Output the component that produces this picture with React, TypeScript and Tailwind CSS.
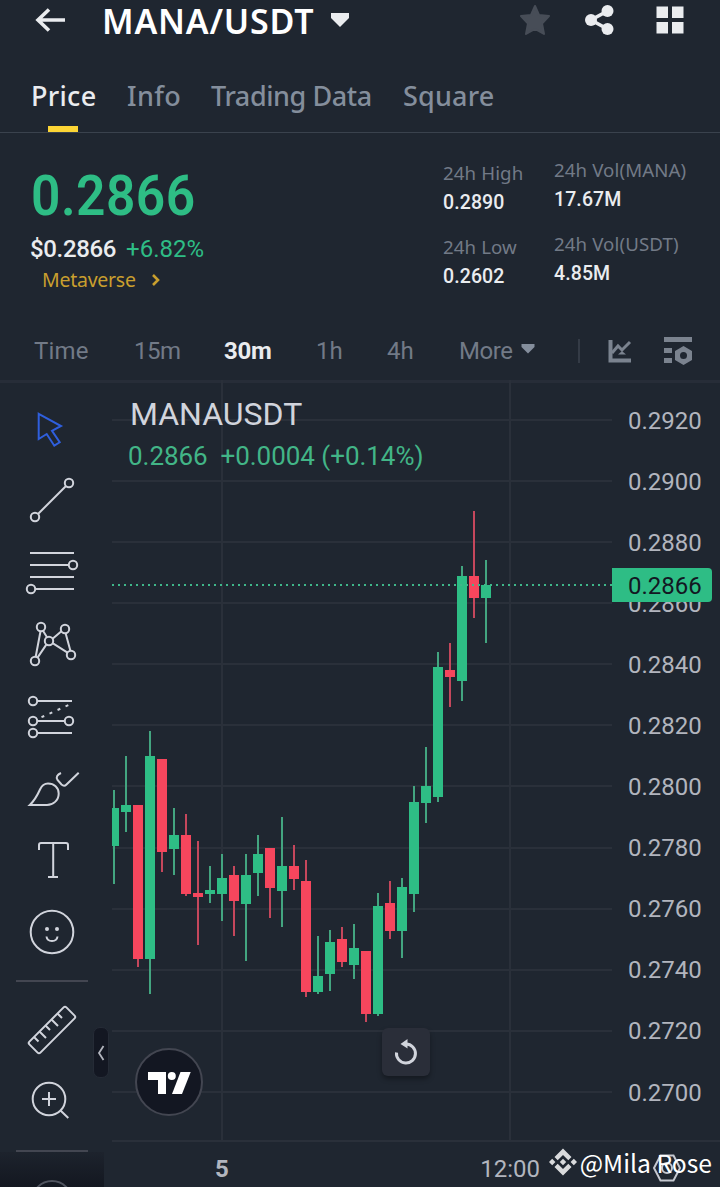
import React from 'react';

type Candle = [high: number, top: number, bottom: number, low: number, up: 0 | 1];

// One candle every 12px, oldest first
const candles: Candle[] = [
  [790, 808, 846, 884, 1],
  [756, 805, 812, 832, 1],
  [805, 805, 959, 967, 0],
  [731, 756, 959, 994, 1],
  [759, 759, 852, 872, 0],
  [808, 835, 849, 875, 1],
  [814, 835, 894, 896, 0],
  [841, 893, 897, 945, 0],
  [866, 890, 894, 903, 1],
  [854, 878, 894, 921, 1],
  [866, 875, 901, 936, 0],
  [854, 875, 904, 961, 1],
  [835, 854, 873, 896, 1],
  [848, 848, 888, 918, 0],
  [817, 866, 891, 927, 1],
  [845, 866, 879, 890, 0],
  [860, 881, 992, 997, 0],
  [936, 976, 992, 994, 1],
  [930, 942, 974, 991, 1],
  [927, 939, 962, 967, 0],
  [924, 948, 965, 979, 1],
  [951, 951, 1014, 1022, 0],
  [893, 906, 1014, 1016, 1],
  [881, 903, 931, 939, 0],
  [878, 887, 931, 958, 1],
  [786, 802, 894, 912, 1],
  [747, 786, 803, 823, 1],
  [652, 667, 797, 802, 1],
  [643, 670, 677, 707, 0],
  [566, 576, 681, 701, 1],
  [511, 576, 598, 618, 0],
  [560, 585, 598, 643, 1],
];

const gridLines = [420, 481, 542, 603, 664, 725, 786, 848, 909, 970, 1031, 1092];

const priceLabels = [
  '0.2920', '0.2900', '0.2880', '0.2860', '0.2840', '0.2820',
  '0.2800', '0.2780', '0.2760', '0.2740', '0.2720', '0.2700',
];

const Tool = ({ children }: { children: React.ReactNode }) => (
  <svg
    viewBox="0 0 72 72"
    className="block h-[72px] w-[72px] shrink-0"
    fill="none"
    stroke="#d1d4dc"
    strokeWidth="2"
  >
    {children}
  </svg>
);

const Header = () => (
  <header className="flex h-[44px] items-start pl-[34px] pr-[36px]">
    <svg className="mt-[7px] h-[26px] w-[32px]" viewBox="0 0 32 26" fill="none" stroke="#eaecef" strokeWidth="3.6">
      <path d="M31 13H4M15 2.5L4 13L15 23.5" />
    </svg>
    <h1 className="ml-[36px] mt-px whitespace-nowrap font-['Noto_Sans'] text-[34px] font-semibold leading-[40px] tracking-[0.8px] text-white">
      MANA/USDT
    </h1>
    <svg className="ml-auto mt-[12px] h-[16px] w-[20px]" viewBox="0 0 20 16" fill="#eaecef">
      <path d="M1 1H19V6L10 15L1 6Z" />
    </svg>
    <div className="ml-[169px] flex items-start">
      <svg className="mt-[4px] h-[32px] w-[32px]" viewBox="0 0 32 32" fill="#474d57" stroke="#474d57" strokeWidth="2" strokeLinejoin="round">
        <path d="M16 2L20 11L30 12L23 19.5L25 30L16 25L7 30L9 19.5L2 12L12 11Z" />
      </svg>
      <svg className="ml-[34px] mt-[4px] h-[32px] w-[32px]" viewBox="0 0 32 32" fill="#eaecef">
        <path d="M22.5 7L6 16L22.5 25" fill="none" stroke="#eaecef" strokeWidth="3.6" />
        <circle cx="22.5" cy="7" r="6" />
        <circle cx="6" cy="16" r="6" />
        <circle cx="22.5" cy="25" r="6" />
      </svg>
      <svg className="ml-[39px] mt-[6px] h-[28px] w-[28px]" viewBox="0 0 28 28" fill="#eaecef">
        <path d="M0.5 0.5H12V12H0.5ZM16 0.5H27.5V12H16ZM0.5 16H12V27.5H0.5ZM16 16H27.5V27.5H16Z" />
      </svg>
    </div>
  </header>
);

const Tabs = () => (
  <nav className="flex h-[89px] items-start border-b border-[#3a424d] pl-[31px] pt-[32px] font-['Noto_Sans'] text-[27px] font-medium leading-[40px] text-[#848e9c]">
    <div className="relative w-[96px] whitespace-nowrap tracking-[0.3px] text-[#eaecef]">
      Price
      <span className="absolute left-[17px] top-[50px] h-[6px] w-[30px] bg-[#fcd535]" />
    </div>
    <div className="w-[84px] whitespace-nowrap tracking-[0.4px]">Info</div>
    <div className="w-[192px] whitespace-nowrap tracking-[-0.42px]">Trading Data</div>
    <div className="whitespace-nowrap tracking-[0.2px]">Square</div>
  </nav>
);

const Stat = ({ label, value }: { label: string; value: string }) => (
  <div className="h-[74px] whitespace-nowrap">
    <div className="font-['Noto_Sans'] text-[18.7px] leading-[28px] tracking-[0.1px] text-[#727a87]">{label}</div>
    <div className="pt-px font-['Roboto'] text-[19.5px] font-medium leading-[30px] tracking-[0.1px] text-[#eaecef]">{value}</div>
  </div>
);

const Summary = () => (
  <section className="flex h-[187px] pl-[31px]">
    <div className="w-[412px] pt-[33px] font-['Roboto']">
      <div className="origin-left scale-x-[0.92] text-[56px] font-semibold leading-[60px] tracking-[0.5px] text-[#2ebd85]">0.2866</div>
      <div className="-ml-px mt-[9px] flex gap-[10px] whitespace-nowrap text-[24px] font-medium leading-[28px]">
        <span className="tracking-[-0.35px] text-[#eaecef]">$0.2866</span>
        <span className="font-normal text-[#2ebd85]">+6.82%</span>
      </div>
      <div className="mt-[3px] flex items-center pl-[11px] font-['Noto_Sans'] text-[19.5px] leading-[28px] tracking-[-0.25px] text-[#c99f2e]">
        <span>Metaverse</span>
        <svg className="ml-[15px] h-[12px] w-[10px]" viewBox="0 0 10 12" fill="none" stroke="#c99f2e" strokeWidth="2.6">
          <path d="M2 1L7 6L2 11" />
        </svg>
      </div>
    </div>
    <div className="w-[111px] pt-[26px]">
      <Stat label="24h High" value="0.2890" />
      <Stat label="24h Low" value="0.2602" />
    </div>
    <div className="pt-[23px]">
      <Stat label="24h Vol(MANA)" value="17.67M" />
      <Stat label="24h Vol(USDT)" value="4.85M" />
    </div>
  </section>
);

const Intervals = () => (
  <div className="flex h-[63px] items-center whitespace-nowrap border-b-[3px] border-[#272d38] pl-[34px] pt-[2px] font-['Roboto'] text-[24px] text-[#727a87]">
    <span className="w-[100px] tracking-[0.2px]">Time</span>
    <span className="w-[90px] tracking-[-0.5px]">15m</span>
    <span className="w-[92px] font-bold tracking-[-0.3px] text-[#eaecef]">30m</span>
    <span className="w-[71px]">1h</span>
    <span className="w-[72px]">4h</span>
    <span className="w-[62px] tracking-[-0.4px]">More</span>
    <svg className="mb-[4px] h-[10px] w-[14px]" viewBox="0 0 14 10" fill="#848e9c">
      <path d="M0.5 0H13.5V3L7 9.5L0.5 3Z" />
    </svg>
    <span className="ml-[43px] h-[24px] w-[2px] bg-[#343b46]" />
    <svg className="ml-[28px] h-[24px] w-[24px]" viewBox="0 0 24 24" fill="none" stroke="#7b838f" strokeWidth="3">
      <path d="M2.5 1V21.5H23" strokeWidth="4" />
      <path d="M4 14L10 7L14 11L22 3" />
      <path d="M10 15.5L14 12L18 15.5Z" fill="#7b838f" stroke="none" />
    </svg>
    <svg className="ml-[32px] h-[30px] w-[28px]" viewBox="0 0 28 30" fill="#7b838f">
      <path d="M0 1H28V6H0ZM0 12H8V17H0ZM0 22H8V27H0Z" />
      <path fillRule="evenodd" d="M19.5 10L28 15V24L19.5 29L11 24V15ZM19.5 16A3.5 3.5 0 1 0 19.5 23A3.5 3.5 0 1 0 19.5 16Z" />
    </svg>
  </div>
);

const Toolbar = () => (
  <aside className="relative flex h-full w-[112px] shrink-0 flex-col overflow-hidden pl-[16px] pt-[10px]">
    <Tool>
      <path d="M22.7 20.8L45 33L36 37.8L43.7 49.3L38.3 52.7L30.7 41L22.7 46Z" stroke="#2f5fdd" />
    </Tool>
    {/* Trend line */}
    <Tool>
      <circle cx="53" cy="18" r="4.2" />
      <circle cx="19" cy="52" r="4.2" />
      <path d="M22 49L50 21" />
    </Tool>
    {/* Fibonacci */}
    <Tool>
      <path d="M14 16H58M14 28H52.8M14 40H58M19.2 52H58" />
      <circle cx="57" cy="28" r="4.2" />
      <circle cx="15" cy="52" r="4.2" />
    </Tool>
    {/* Pattern */}
    <Tool>
      <circle cx="25" cy="18" r="4.2" />
      <circle cx="49" cy="20" r="4.2" />
      <circle cx="33" cy="32" r="4.2" />
      <circle cx="55" cy="46" r="4.2" />
      <circle cx="19" cy="52" r="4.2" />
      <path d="M19.7 47.8L24.5 22.2M27 21.8L31 28.2M36.6 29.8L45.4 22.2M49.6 24.2L54.4 41.8M51.5 43.7L36.6 34.2M30.5 35.4L21.5 48.6" />
    </Tool>
    {/* Forecast */}
    <Tool>
      <circle cx="17" cy="20" r="4.2" />
      <circle cx="17" cy="40" r="4.2" />
      <circle cx="53" cy="40" r="4.2" />
      <circle cx="17" cy="52" r="4.2" />
      <path d="M21.2 20H56M21.2 40H48.8M21.2 52H56" />
      <path d="M25.5 36.2L53 23.8" strokeDasharray="3 5.8" />
    </Tool>
    {/* Brush */}
    <Tool>
      <path d="M13.8 52C19 47 21.5 42 24 36.5C26 32 28.5 30.5 32 30.5C38 30.5 42.7 34.5 42.7 40.5C42.7 47.5 37 52 31 52Z" />
      <path d="M45 20C41.5 21.5 39.5 24 41.5 27L45.5 31.5C47.5 33.3 49 33 50.5 31.5L62.7 19.7" />
    </Tool>
    {/* Text */}
    <Tool>
      <path d="M23 25V20Q23 18 25 18H50Q52 18 52 20V25M37.2 18V52M32 52H42" />
    </Tool>
    {/* Emoji */}
    <Tool>
      <circle cx="36" cy="35" r="21.3" />
      <circle cx="31" cy="32" r="2" fill="#d1d4dc" stroke="none" />
      <circle cx="41" cy="32" r="2" fill="#d1d4dc" stroke="none" />
      <path d="M30.5 39.5Q31 44 36 44Q41 44 41.5 39.5" />
    </Tool>
    <div className="mt-[11px] h-[2px] w-[72px] shrink-0 bg-[#434651]" />
    <div className="mt-[12px]">
      {/* Ruler */}
      <Tool>
        <path d="M47.6 13.4Q49 12 50.4 13.4L58.6 21.6Q60 23 58.6 24.4L24.4 58.6Q23 60 21.6 58.6L13.4 50.4Q12 49 13.4 47.6Z" />
        <path d="M18 43L22.5 47.5M23.5 37.5L30 44M29.5 31.5L34 36M35.5 25.5L42 32M41.5 19.5L46 24" />
      </Tool>
      {/* Zoom in */}
      <Tool>
        <circle cx="33" cy="33" r="16.3" />
        <path d="M33 26V40M26 33H40M44.5 44.5L52.3 52" />
      </Tool>
    </div>
    <div className="mt-[12px] h-[2px] w-[72px] shrink-0 bg-[#434651]" />
    <div className="-ml-[16px] h-[36px] w-[104px] shrink-0 bg-linear-to-b from-[#1d232d] to-[#131720]">
      <svg className="block h-[35px] w-[104px]" viewBox="0 0 104 35" fill="none" stroke="#50545f" strokeWidth="2">
        <circle cx="52" cy="49" r="20" />
      </svg>
    </div>
    <button className="absolute left-[93px] top-[644px] flex h-[51px] w-[16px] items-center justify-center rounded-[7px] border border-[#252b36] bg-[#131722]">
      <svg className="h-[16px] w-[8px] shrink-0" viewBox="0 0 8 16" fill="none" stroke="#b2b5be" strokeWidth="1.8">
        <path d="M6.5 1L2 8L6.5 15" />
      </svg>
    </button>
  </aside>
);

const Plot = () => (
  <svg className="block h-[759px] w-[500px] overflow-visible" viewBox="112 383 500 759">
    <g stroke="#2a303a" strokeWidth="2">
      {gridLines.map((y) => (
        <path key={y} d={`M112 ${y}H612`} />
      ))}
      <path d="M222 380V1140M510 380V1140M112 1141H720" />
    </g>
    {candles.map(([high, top, bottom, low, up], i) => {
      const x = 114 + i * 12;
      const left = Math.max(112, x - 5);
      return (
        <g key={i}>
          <rect x={x - 1} y={high} width="2" height={low - high} fill={up ? '#43a580' : '#c5475c'} />
          <rect x={left} y={top} width={x + 5 - left} height={bottom - top} fill={up ? '#2ebd85' : '#f6465d'} />
        </g>
      );
    })}
    <path d="M112 585H612" stroke="#3fb78a" strokeWidth="2" strokeDasharray="2 4" />

    {/* TradingView badge */}
    <circle cx="169" cy="1082" r="33" fill="#131722" stroke="#434651" strokeWidth="2" />
    <g fill="#fff">
      <path d="M148 1072H166V1094H158V1080H148Z" />
      <circle cx="171.8" cy="1076" r="4" />
      <path d="M180.5 1072H190.7L182 1094H172Z" />
    </g>
  </svg>
);

const Chart = () => (
  <main className="flex h-[804px]">
    <Toolbar />
    <div className="relative w-[500px] shrink-0 font-['Roboto']">
      <Plot />
      <div className="flex h-[45px] items-center text-[24px] leading-none text-[#b2b5be]">
        <span className="ml-[103px] mt-[8px] font-bold">5</span>
        <span className="ml-auto mr-[72px] mt-[8px]">12:00</span>
      </div>
      <div className="absolute left-[18px] top-[13px] whitespace-nowrap text-[32px] leading-[37px] text-[#d1d4dc]">MANAUSDT</div>
      <div className="absolute left-[16px] top-[58px] whitespace-pre text-[26px] leading-[30px] tracking-[-0.04px] text-[#42b587]">
        0.2866{'  '}+0.0004 (+0.14%)
      </div>
      <button className="absolute left-[270px] top-[645px] flex h-[48px] w-[48px] items-center justify-center rounded-[6px] bg-[#2a2e39] shadow-[0_3px_5px_rgba(0,0,0,0.35)]">
        <svg className="h-[28px] w-[28px]" viewBox="0 0 28 28" fill="none" stroke="#d1d4dc" strokeWidth="3">
          <path d="M4.5 14.5A9.5 9.5 0 1 0 14 6" />
          <path d="M15.5 1V10.5L8.5 6Z" fill="#d1d4dc" stroke="none" />
        </svg>
      </button>
    </div>
    <div className="relative w-[108px] pl-[16px] pt-[7px] font-['Roboto'] text-[24px] text-[#b2b5be]">
      {priceLabels.map((price) => (
        <div key={price} className="flex h-[61.1px] items-center">{price}</div>
      ))}
      <div className="absolute left-0 top-[185px] flex h-[34px] w-[100px] items-center rounded-r-[4px] bg-[#2ebd85] pl-[16px] pt-[2px] text-[#131722]">
        0.2866
      </div>
      <svg className="absolute left-[40px] top-[770px] h-[30px] w-[30px]" viewBox="0 0 30 30" fill="none" stroke="#c5c8d0" strokeWidth="2">
        <path d="M8.5 2.5H21.5L28 15L21.5 27.5H8.5L2 15Z" />
        <circle cx="15" cy="15" r="5" />
      </svg>
      {/* Author tag */}
      <div className="absolute right-[8px] top-[761px] flex items-center whitespace-nowrap font-['Noto_Sans_CJK_SC',sans-serif] text-[24.7px] leading-[36px] text-white">
        <svg className="mr-[3px] h-[28px] w-[28px]" viewBox="0 0 28 28" fill="#d9dadc">
          <path d="M14 0.5L22.5 9L19.3 12.2L14 6.9L8.7 12.2L5.5 9Z" />
          <path d="M14 27.5L22.5 19L19.3 15.8L14 21.1L8.7 15.8L5.5 19Z" />
          <path d="M3.2 10.8L6.4 14L3.2 17.2L0 14ZM14 10.8L17.2 14L14 17.2L10.8 14ZM24.8 10.8L28 14L24.8 17.2L21.6 14Z" />
        </svg>
        @Mila Rose
      </div>
    </div>
  </main>
);

export default function App() {
  return (
    <div className="h-[1187px] w-[720px] overflow-hidden bg-[#1f2630]">
      <Header />
      <Tabs />
      <Summary />
      <Intervals />
      <Chart />
    </div>
  );
}
